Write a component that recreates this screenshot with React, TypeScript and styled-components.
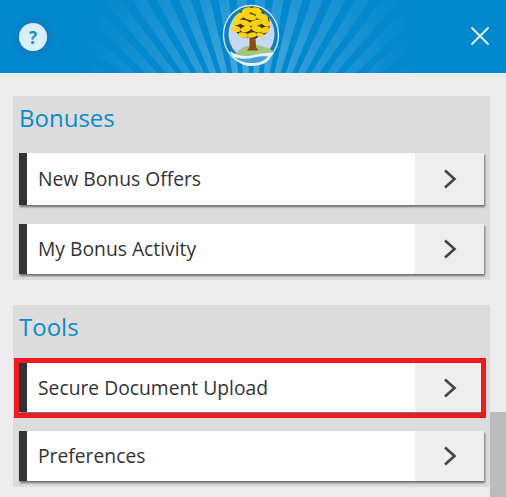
import styled, { createGlobalStyle } from "styled-components";

const GlobalStyle = createGlobalStyle`
  html, body {
    margin: 0;
    padding: 0;
    background-color: #ececec;
  }
  * {
    box-sizing: border-box;
  }
`;

const Page = styled.div`
  position: relative;
  width: 506px;
  height: 497px;
  overflow: hidden;
  background-color: #ececec;
  font-family: "Open Sans", "Noto Sans", sans-serif;
`;

const Header = styled.header`
  position: relative;
  height: 73px;
  display: flex;
  align-items: center;
  justify-content: space-between;
  padding: 0 17px 0 13px;
  background-color: #0288cf;
  overflow: hidden;
`;

const Rays = styled.svg`
  position: absolute;
  top: 0;
  left: 0;
`;

const HelpHalo = styled.div`
  position: relative;
  width: 40px;
  height: 40px;
  margin-top: 1px;
  display: flex;
  align-items: center;
  justify-content: center;
  border-radius: 50%;
  background-color: #0a80c6;
`;

const HelpButton = styled.div`
  width: 28px;
  height: 28px;
  display: flex;
  align-items: center;
  justify-content: center;
  border-radius: 50%;
  background-color: #dceefb;
  color: #1f8dcf;
  font-size: 17px;
  font-weight: 700;
  line-height: 1;
`;

const Logo = styled.svg`
  position: absolute;
  top: 4px;
  left: 221px;
  filter: blur(0.4px);
`;

const CloseIcon = styled.svg`
  position: relative;
  margin-top: -1px;
`;

const Content = styled.main`
  padding: 23px 16px 0 13px;
`;

const Section = styled.section`
  margin-bottom: 25px;
  padding: 0 6px 6px;
  background-color: #dcdcdc;
`;

const SectionTitle = styled.h2<{ $height: number }>`
  height: ${(props) => props.$height}px;
  margin: 0;
  padding-top: 6px;
  color: #0a8ad0;
  font-size: 24px;
  font-weight: 400;
  line-height: 32px;
`;

const RowList = styled.div`
  display: flex;
  flex-direction: column;
  gap: 19px;
`;

const Row = styled.div<{ $height: number }>`
  position: relative;
  height: ${(props) => props.$height}px;
  display: flex;
  align-items: stretch;
  border-left: 8px solid #333333;
  background-color: #ffffff;
  box-shadow: 1px 2px 2px rgba(0, 0, 0, 0.5);
`;

const RowLabel = styled.div`
  flex: 1;
  display: flex;
  align-items: center;
  padding: 0 0 1px 11px;
  color: #333333;
  font-size: 19.3px;
`;

const RowArrow = styled.div`
  width: 69px;
  display: flex;
  align-items: center;
  justify-content: center;
  background-color: #eeeeee;
`;

const Highlight = styled.div`
  position: absolute;
  top: -5px;
  left: -13px;
  right: -2px;
  bottom: -6px;
  border: 5px solid #ed1c24;
`;

const ScrollThumb = styled.div`
  position: absolute;
  top: 412px;
  right: 0;
  width: 16px;
  height: 85px;
  background-color: #bcbcbc;
`;

const rayAngles = Array.from({ length: 22 }, (_, i) => (i - 10.5) * 6);

function rayPoints(angle: number) {
  const cx = 251;
  const cy = 172;
  const spread = 1.7;
  const len = 380;
  const a = ((angle - spread) * Math.PI) / 180;
  const b = ((angle + spread) * Math.PI) / 180;
  return [
    `${cx},${cy}`,
    `${cx + Math.sin(a) * len},${cy - Math.cos(a) * len}`,
    `${cx + Math.sin(b) * len},${cy - Math.cos(b) * len}`,
  ].join(" ");
}

function Sunburst() {
  return (
    <Rays width="506" height="73" viewBox="0 0 506 73">
      <defs>
        <radialGradient
          id="rayFade"
          gradientUnits="userSpaceOnUse"
          cx="251"
          cy="66"
          r="165"
        >
          <stop offset="0" stopColor="#fff" stopOpacity="0.28" />
          <stop offset="0.45" stopColor="#fff" stopOpacity="0.13" />
          <stop offset="1" stopColor="#fff" stopOpacity="0" />
        </radialGradient>
      </defs>
      {rayAngles.map((angle) => (
        <polygon key={angle} points={rayPoints(angle)} fill="url(#rayFade)" />
      ))}
    </Rays>
  );
}

// cx, cy, rx, ry, rotation of each clump of leaves
const crownBlobs = [
  [26, 7, 5.5, 3.5, -20],
  [35, 7, 6, 3.5, 15],
  [19, 12, 5, 3, -25],
  [29, 13, 7, 3, 10],
  [41, 13, 6.5, 3.5, 20],
  [16, 18, 4.5, 3, -15],
  [24, 19, 6, 2.8, 18],
  [35, 19, 7, 3, -12],
  [45, 19, 4.5, 3.2, 25],
  [15, 25, 5, 3, 10],
  [25, 25, 5.5, 3, -15],
  [36, 25, 6, 3, 15],
  [44, 26, 4.5, 3, -20],
  [22, 31, 5, 2.5, 12],
  [31, 31, 5, 2.6, -8],
  [39, 31, 3.5, 2.2, 15],
];

function TreeLogo() {
  return (
    <Logo width="60" height="64" viewBox="0 0 60 64">
      <ellipse
        cx="30"
        cy="31"
        rx="27.5"
        ry="29.5"
        fill="#0f7fc2"
        stroke="#dcedf8"
        strokeWidth="1.3"
      />
      <ellipse cx="30.5" cy="30" rx="23" ry="25" fill="#c8d8f2" />
      <path
        d="M14 51c3-6 11-10 19-10 7 0 14 2 20 7l-4 3c-8 3-26 3-35 0z"
        fill="#a1c681"
      />
      <path d="M28.500 33h6l0.500 10 2.500 3.500H26l2.500-3.500z" fill="#8c4a12" />
      <path
        d="M24 4l8-1.500 8 2 4 6 4 3 1 6-1 7-4 4-5 1-4 3-7-1-5 0-6-3-3-6 1-6 1-6 4-5z"
        fill="#3f340e"
      />
      <g fill="#fbd30f">
        {crownBlobs.map(([cx, cy, rx, ry, rot]) => (
          <ellipse
            key={`${cx}-${cy}`}
            cx={cx}
            cy={cy}
            rx={rx}
            ry={ry}
            transform={`rotate(${rot} ${cx} ${cy})`}
          />
        ))}
      </g>
      <path
        d="M9 47c7 5 15 6 24 4 6-1.500 13-3 20-2l-4 5c-2 5-10 8-19 8-11 0-18-7-21-15z"
        fill="#e6f2fa"
      />
      <path
        d="M13 53c7 2.500 14 2 20 0.500 5-1.200 10-1.800 14-1-4 5-10 6.500-16 6.500-7 0-13-2-18-6z"
        fill="#4c9ed6"
      />
    </Logo>
  );
}

function Chevron() {
  return (
    <svg width="14" height="20" viewBox="0 0 14 20">
      <path
        d="M2 1.500l9.500 8.500-9.500 8.500"
        fill="none"
        stroke="#444444"
        strokeWidth="2.6"
      />
    </svg>
  );
}

function MenuRow({
  label,
  height = 50,
  highlighted = false,
}: {
  label: string;
  height?: number;
  highlighted?: boolean;
}) {
  return (
    <Row $height={height}>
      <RowLabel>{label}</RowLabel>
      <RowArrow>
        <Chevron />
      </RowArrow>
      {highlighted && <Highlight />}
    </Row>
  );
}

function App() {
  return (
    <Page>
      <GlobalStyle />
      <Header>
        <Sunburst />
        <HelpHalo>
          <HelpButton>?</HelpButton>
        </HelpHalo>
        <TreeLogo />
        <CloseIcon width="18" height="18" viewBox="0 0 18 18">
          <path d="M0.5 0.5l17 17M17.5 0.5l-17 17" stroke="#ffffff" strokeWidth="1.8" />
        </CloseIcon>
      </Header>
      <Content>
        <Section>
          <SectionTitle $height={57}>Bonuses</SectionTitle>
          <RowList>
            <MenuRow label="New Bonus Offers" height={52} />
            <MenuRow label="My Bonus Activity" />
          </RowList>
        </Section>
        <Section>
          <SectionTitle $height={58}>Tools</SectionTitle>
          <RowList>
            <MenuRow label="Secure Document Upload" height={49} highlighted />
            <MenuRow label="Preferences" />
          </RowList>
        </Section>
      </Content>
      <ScrollThumb />
    </Page>
  );
}

export default App;
